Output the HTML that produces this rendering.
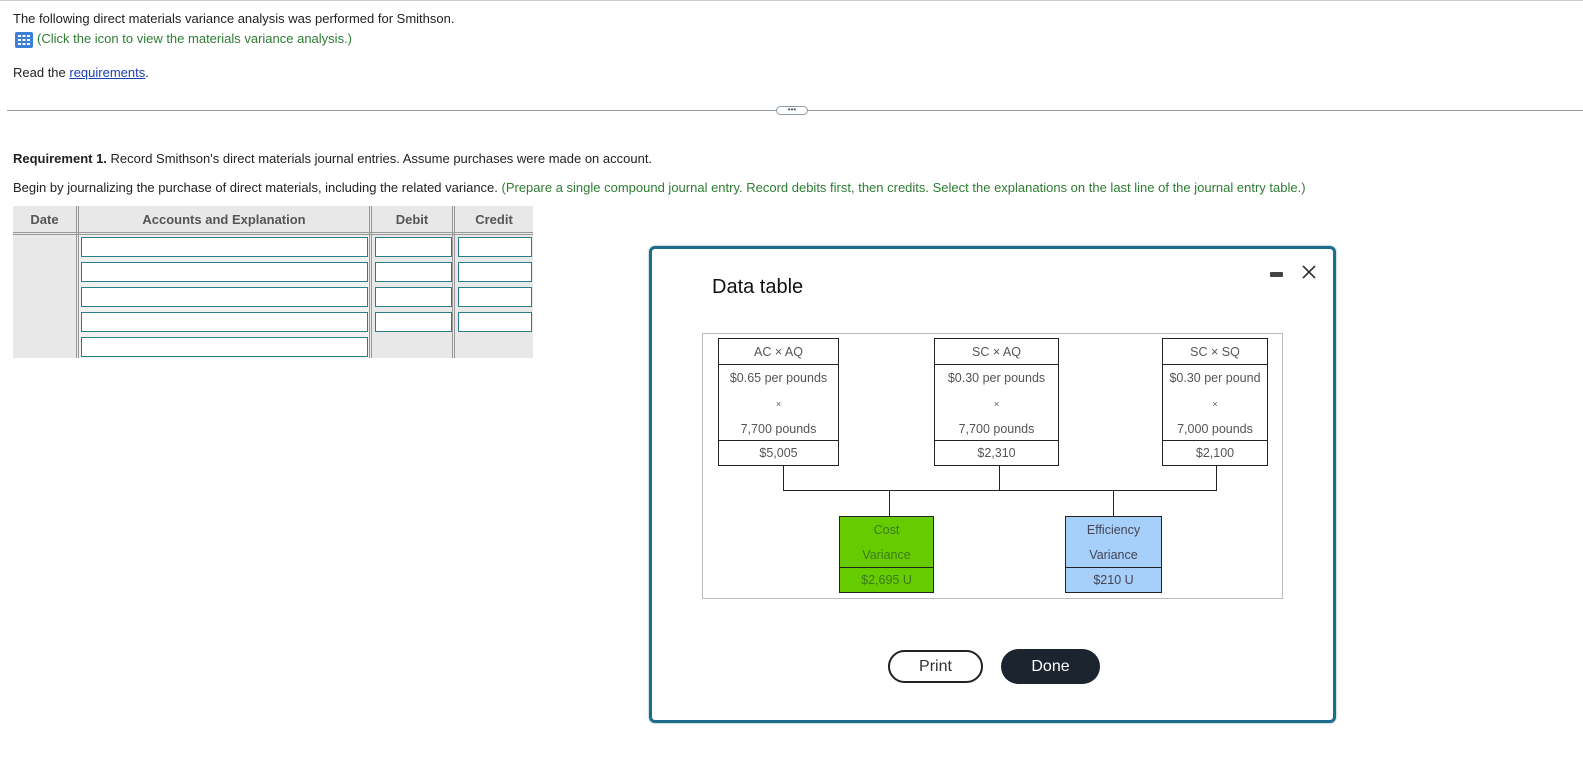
<!DOCTYPE html>
<html><head><meta charset="utf-8"><style>
*{margin:0;padding:0;box-sizing:border-box}
body{width:1583px;height:761px;position:relative;background:#fff;font-family:"Liberation Sans",Arial,sans-serif;font-size:13px;color:#222;overflow:hidden}
.a{position:absolute;white-space:nowrap}
.g{color:#2e7d32}
.inp{position:absolute;border:1px solid #2a7f86;background:#fff;height:20px}
.bx{position:absolute;border:1px solid #222;background:#fff;text-align:center;color:#555;font-size:12.5px}
.ln{position:absolute;background:#222}
.hd{height:26px;line-height:26px;border-bottom:1px solid #222}
.md{height:76px;border-bottom:1px solid #222;line-height:25px;padding-top:1px}
.ft{line-height:24px}
</style></head><body>
<div class="a" style="left:0;top:0;width:1583px;height:1px;background:#ccc"></div>
<div class="a" style="left:13px;top:11px">The following direct materials variance analysis was performed for Smithson.</div>
<svg class="a" style="left:15px;top:32px" width="18" height="16" viewBox="0 0 18 16"><rect x="0" y="0" width="18" height="16" rx="2" fill="#3b7fd9"/><g fill="#fff"><rect x="3" y="3" width="3" height="2"/><rect x="7.5" y="3" width="3" height="2"/><rect x="12" y="3" width="3" height="2"/><rect x="3" y="7" width="3" height="2"/><rect x="7.5" y="7" width="3" height="2"/><rect x="12" y="7" width="3" height="2"/><rect x="3" y="11" width="3" height="2"/><rect x="7.5" y="11" width="3" height="2"/><rect x="12" y="11" width="3" height="2"/></g></svg>
<div class="a g" style="left:37px;top:31px">(Click the icon to view the materials variance analysis.)</div>
<div class="a" style="left:13px;top:65px">Read the <span style="color:#1a3fb5;text-decoration:underline">requirements</span>.</div>
<div class="a" style="left:7px;top:110px;width:1576px;height:1px;background:#999"></div>
<div class="a" style="left:776px;top:106px;width:32px;height:9px;border:1px solid #8a9aaa;border-radius:5px;background:#fff;font-size:8px;line-height:5px;text-align:center;color:#456">•••</div>
<div class="a" style="left:13px;top:151px"><b>Requirement 1.</b> Record Smithson's direct materials journal entries. Assume purchases were made on account.</div>
<div class="a" style="left:13px;top:180px">Begin by journalizing the purchase of direct materials, including the related variance. <span class="g">(Prepare a single compound journal entry. Record debits first, then credits. Select the explanations on the last line of the journal entry table.)</span></div>
<!-- journal table -->
<div class="a" style="left:13px;top:206px;width:520px;height:152px;background:#e8e8e8"></div>
<div class="a" style="left:13px;top:232px;width:520px;height:3px;border-top:1px solid #999;border-bottom:1px solid #999"></div>
<div class="a" style="left:76px;top:206px;width:3px;height:152px;border-left:1px solid #999;border-right:1px solid #999"></div>
<div class="a" style="left:369px;top:206px;width:3px;height:152px;border-left:1px solid #999;border-right:1px solid #999"></div>
<div class="a" style="left:452px;top:206px;width:3px;height:152px;border-left:1px solid #999;border-right:1px solid #999"></div>
<div class="a" style="left:79px;top:235px;width:290px;height:123px;background:#f1f1f1"></div>
<div class="a" style="left:13px;top:212px;width:63px;text-align:center;font-weight:bold;color:#555">Date</div>
<div class="a" style="left:79px;top:212px;width:290px;text-align:center;font-weight:bold;color:#555">Accounts and Explanation</div>
<div class="a" style="left:372px;top:212px;width:80px;text-align:center;font-weight:bold;color:#555">Debit</div>
<div class="a" style="left:455px;top:212px;width:78px;text-align:center;font-weight:bold;color:#555">Credit</div>
<div class="inp" style="left:81px;top:237px;width:287px"></div>
<div class="inp" style="left:81px;top:262px;width:287px"></div>
<div class="inp" style="left:81px;top:287px;width:287px"></div>
<div class="inp" style="left:81px;top:312px;width:287px"></div>
<div class="inp" style="left:81px;top:337px;width:287px"></div>
<div class="inp" style="left:375px;top:237px;width:77px"></div>
<div class="inp" style="left:375px;top:262px;width:77px"></div>
<div class="inp" style="left:375px;top:287px;width:77px"></div>
<div class="inp" style="left:375px;top:312px;width:77px"></div>
<div class="inp" style="left:458px;top:237px;width:74px"></div>
<div class="inp" style="left:458px;top:262px;width:74px"></div>
<div class="inp" style="left:458px;top:287px;width:74px"></div>
<div class="inp" style="left:458px;top:312px;width:74px"></div>
<!-- dialog -->
<div class="a" style="left:649px;top:246px;width:687px;height:477px;border:3px solid #1e6c8c;border-radius:6px;background:#fff;box-shadow:0 0 2px #7aa"></div>
<div class="a" style="left:712px;top:276px;font-size:20px;color:#111">Data table</div>
<div class="a" style="left:1270px;top:272px;width:13px;height:5px;background:#444;border-radius:1px"></div>
<svg class="a" style="left:1301px;top:264px" width="16" height="16"><path d="M2 2L14 14M14 2L2 14" stroke="#333" stroke-width="1.6"/></svg>
<div class="a" style="left:702px;top:333px;width:581px;height:266px;border:1px solid #bbb"></div>
<div class="bx" style="left:718px;top:338px;width:121px;height:128px">
<div class="hd">AC × AQ</div>
<div class="md">$0.65 per pounds<br><span style="font-size:9px">×</span><br>7,700 pounds</div>
<div class="ft">$5,005</div></div>
<div class="bx" style="left:934px;top:338px;width:125px;height:128px">
<div class="hd">SC × AQ</div>
<div class="md">$0.30 per pounds<br><span style="font-size:9px">×</span><br>7,700 pounds</div>
<div class="ft">$2,310</div></div>
<div class="bx" style="left:1162px;top:338px;width:106px;height:128px">
<div class="hd">SC × SQ</div>
<div class="md">$0.30 per pound<br><span style="font-size:9px">×</span><br>7,000 pounds</div>
<div class="ft">$2,100</div></div>
<div class="ln" style="left:783px;top:466px;width:1px;height:25px"></div>
<div class="ln" style="left:999px;top:466px;width:1px;height:25px"></div>
<div class="ln" style="left:1216px;top:466px;width:1px;height:25px"></div>
<div class="ln" style="left:783px;top:490px;width:434px;height:1px"></div>
<div class="ln" style="left:889px;top:490px;width:1px;height:26px"></div>
<div class="ln" style="left:1113px;top:490px;width:1px;height:26px"></div>
<div class="bx" style="left:839px;top:516px;width:95px;height:77px;background:#66cc00;color:#3a7a1a">
<div style="height:51px;border-bottom:1px solid #222;line-height:25px;padding-top:1px">Cost<br>Variance</div>
<div style="line-height:24px">$2,695 U</div></div>
<div class="bx" style="left:1065px;top:516px;width:97px;height:77px;background:#a6cffa;color:#445">
<div style="height:51px;border-bottom:1px solid #222;line-height:25px;padding-top:1px">Efficiency<br>Variance</div>
<div style="line-height:24px">$210 U</div></div>
<div class="a" style="left:888px;top:650px;width:95px;height:33px;border:2px solid #222;border-radius:17px;text-align:center;line-height:29px;font-size:16px;color:#333">Print</div>
<div class="a" style="left:1001px;top:649px;width:99px;height:35px;background:#1c2430;border-radius:18px;text-align:center;line-height:35px;font-size:16px;color:#fff">Done</div>
</body></html>
